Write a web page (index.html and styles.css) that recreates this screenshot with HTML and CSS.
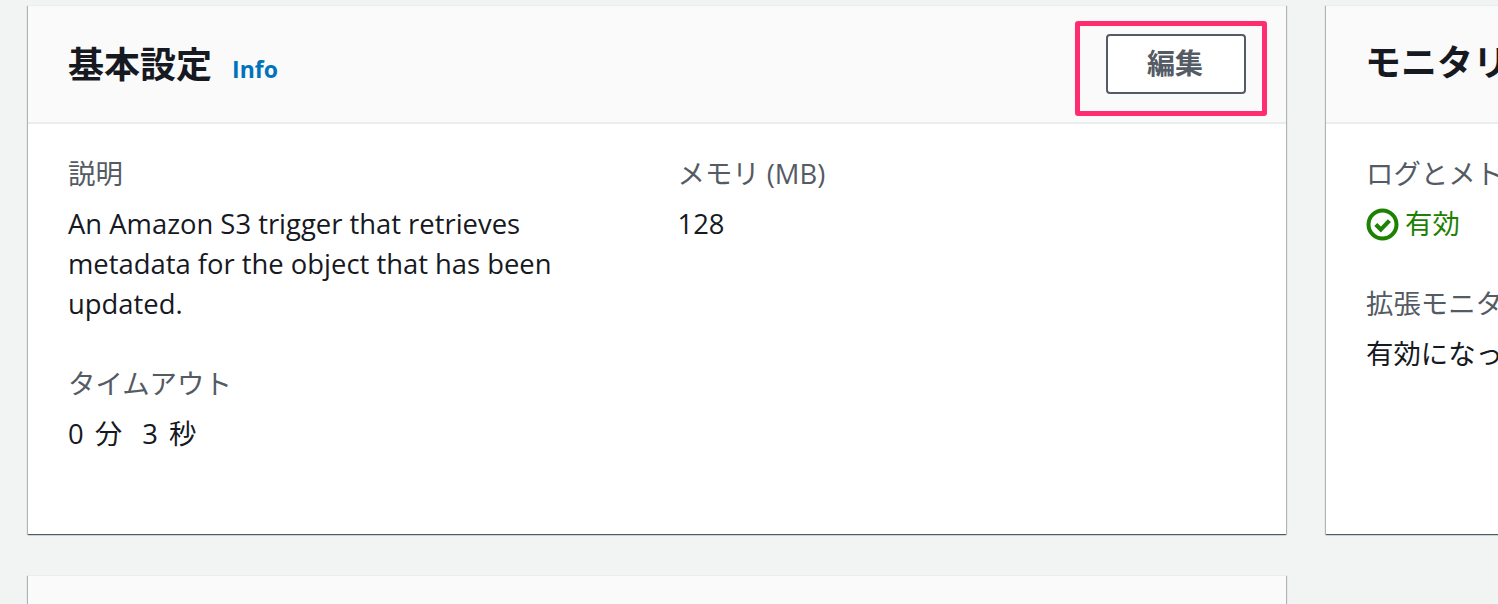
FILE: index.html
```html
<!DOCTYPE html>
<html lang="ja">
<head>
<meta charset="utf-8">
<title>基本設定</title>
<link rel="stylesheet" href="styles.css">
</head>
<body>
<div class="page">
  <div class="top-row">
    <section class="card">
      <header class="card-head">
        <div class="title-wrap">
          <h2 class="title">基本設定</h2>
          <a class="info">Info</a>
        </div>
        <button class="btn">編集<span class="highlight"></span></button>
      </header>
      <div class="card-body cols">
        <div class="col col-main">
          <div class="field">
            <div class="label">説明</div>
            <div class="value">An Amazon S3 trigger that retrieves metadata for the object that has been updated.</div>
          </div>
          <div class="field">
            <div class="label">タイムアウト</div>
            <div class="value"><span class="dur">0 分</span><span class="dur">3 秒</span></div>
          </div>
        </div>
        <div class="col">
          <div class="field">
            <div class="label">メモリ (MB)</div>
            <div class="value">128</div>
          </div>
        </div>
      </div>
    </section>
    <section class="card card-side">
      <header class="card-head">
        <h2 class="title">モニタリング</h2>
      </header>
      <div class="card-body">
        <div class="field">
          <div class="label nowrap">ログとメトリクス</div>
          <div class="value status">
            <svg class="status-icon" viewBox="0 0 33 33" aria-hidden="true">
              <circle cx="16.5" cy="16.5" r="14" fill="none" stroke="#1d8102" stroke-width="4"/>
              <path d="M9.8 16.6l5 5 8.6-9" fill="none" stroke="#1d8102" stroke-width="4.2"/>
            </svg>
            <span>有効</span>
          </div>
        </div>
        <div class="field">
          <div class="label nowrap">拡張モニタリング</div>
          <div class="value nowrap">有効になっていません</div>
        </div>
      </div>
    </section>
  </div>
  <section class="card card-next"></section>
</div>
</body>
</html>
```
FILE: styles.css
```css
* { box-sizing: border-box; }
html, body { margin: 0; height: 100%; }
body {
  background: #f2f3f3;
  font-family: "Open Sans", "Noto Sans CJK JP", sans-serif;
  color: #16191f;
  overflow: hidden;
}
.page { padding: 5px 0 0 28px; width: 1900px; }
.top-row { display: grid; grid-template-columns: 1258px 500px; column-gap: 40px; }
.card {
  background: #fff;
  border-top: 1px solid #eaeded;
  box-shadow: 0 1px 1px 0 rgba(0,28,36,.5), 1px 1px 1px 0 rgba(0,28,36,.22), -1px 1px 1px 0 rgba(0,28,36,.22);
  height: 529px;
}
.card-next { margin-top: 41px; width: 1258px; height: 29px; background: #fafafa; }
.card-head {
  height: 118px;
  background: #fafafa;
  border-bottom: 2px solid #eaeded;
  padding: 28px 40px 0;
  display: flex;
  justify-content: space-between;
  align-items: flex-start;
}
.title-wrap { display: flex; align-items: baseline; gap: 20px; padding-top: 9px; }
.title { margin: 0; font-size: 36px; line-height: 44px; font-weight: 700; white-space: nowrap; }
.card-side .title { margin-top: 7px; margin-left: -1px; }
.info { color: #0073bb; font-size: 23px; font-weight: 700; }
.btn {
  position: relative;
  flex: none;
  width: 140px;
  height: 60px;
  padding: 0 2px 2px 0;
  background: #fff;
  border: 2px solid #545b64;
  border-radius: 4px;
  color: #545b64;
  font: 700 28px/1 "Open Sans", "Noto Sans CJK JP", sans-serif;
}
.highlight {
  position: absolute;
  left: -33px;
  top: -15px;
  width: 192px;
  height: 95px;
  border: 5px solid #ff2d6f;
  border-radius: 3px;
}
.card-body { padding: 30px 40px; }
.cols { display: grid; grid-template-columns: 570px 1fr; column-gap: 39.5px; }
.field { margin-bottom: 40px; }
.label { color: #545b64; font-size: 27.4px; line-height: 40px; margin-bottom: 10px; }
.value { font-size: 27.4px; line-height: 40px; }
.nowrap { white-space: nowrap; }
.dur { word-spacing: 4px; margin-right: 20px; }
.status { color: #1d8102; display: flex; align-items: center; gap: 6px; }
.status-icon { width: 33px; height: 33px; flex: none; }
```
